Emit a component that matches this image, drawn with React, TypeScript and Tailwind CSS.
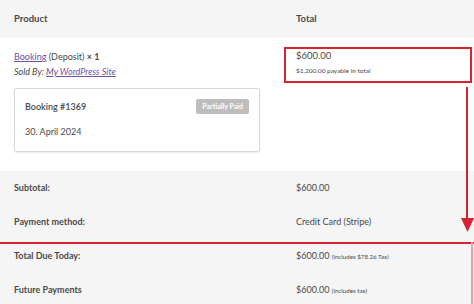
import React from "react";

const font = { fontFamily: "Lato, 'Noto Sans', sans-serif" };

function Row({ label, children }: { label: string; children: React.ReactNode }) {
  return (
    <div className="flex h-[34px] items-center">
      <div className="w-[282px] pl-[14px] text-[9px] font-bold text-[#4a4a4a]">{label}</div>
      <div className="flex-1 pl-[14px] text-[9px] text-[#4a4a4a]">{children}</div>
    </div>
  );
}

export default function App() {
  return (
    <div className="relative h-[304px] w-[474px] overflow-hidden bg-white" style={font}>
      {/* header */}
      <div className="flex h-[38px] items-center bg-[#f5f5f5]">
        <div className="w-[282px] pl-[14px] text-[9.5px] font-bold text-[#4a4a4a]">Product</div>
        <div className="flex-1 pl-[14px] text-[9.5px] font-bold text-[#4a4a4a]">Total</div>
      </div>
      {/* product row */}
      <div className="flex h-[133px]">
        <div className="w-[282px] pl-[14px] pt-[12px]">
          <div className="text-[9px] leading-[14px] text-[#4a4a4a]">
            <a className="text-[#6d4fa3] underline">Booking</a> (Deposit) <span className="font-bold">× 1</span>
          </div>
          <div className="mt-[1px] text-[9px] italic leading-[14px] text-[#4a4a4a]">
            Sold By: <a className="text-[#6d4fa3] underline">My WordPress Site</a>
          </div>
          <div className="mt-[9px] h-[64px] w-[246px] rounded-[2px] border border-[#d8d8d8] px-[10px] pt-[10px] shadow-[0_1px_2px_rgba(0,0,0,0.08)]">
            <div className="flex items-center justify-between">
              <span className="text-[9px] font-semibold text-[#4a4a4a]">Booking #1369</span>
              <span className="rounded-[2px] bg-[#bdbdbd] px-[6px] py-[3px] text-[7px] font-bold leading-[9px] text-white">
                Partially Paid
              </span>
            </div>
            <div className="mt-[11px] text-[9px] text-[#4a4a4a]">30. April 2024</div>
          </div>
        </div>
        <div className="flex-1 pl-[14px] pt-[11px]">
          <div className="text-[9.5px] leading-[14px] text-[#4a4a4a]">$600.00</div>
          <div className="mt-[3px] text-[6.5px] leading-[10px] text-[#4a4a4a]">$1,200.00 payable in total</div>
        </div>
      </div>
      {/* totals */}
      <div className="bg-[#f5f5f5]">
        <Row label="Subtotal:">$600.00</Row>
        <Row label="Payment method:">Credit Card (Stripe)</Row>
        <Row label="Total Due Today:">
          $600.00 <span className="text-[6.2px]">(includes $78.26 Tax)</span>
        </Row>
        <Row label="Future Payments">
          $600.00 <span className="text-[6.2px]">(includes tax)</span>
        </Row>
      </div>

      {/* annotations */}
      <div className="absolute left-[284px] top-[47px] h-[36px] w-[188px] border-2 border-[#d7222f]" />
      <div className="absolute left-[466px] top-[87px] h-[133px] w-[2px] bg-[#d7222f]" />
      <svg className="absolute left-[461px] top-[218px]" width="13" height="14" viewBox="0 0 13 14">
        <polygon points="0,0 13,0 6.5,14" fill="#d7222f" />
      </svg>
      <div className="absolute left-0 top-[242px] h-[2px] w-[474px] bg-[#d7222f]" />
      <div className="absolute left-[471px] top-[242px] h-[62px] w-[2px] bg-[#eaa0a6]" />
    </div>
  );
}
